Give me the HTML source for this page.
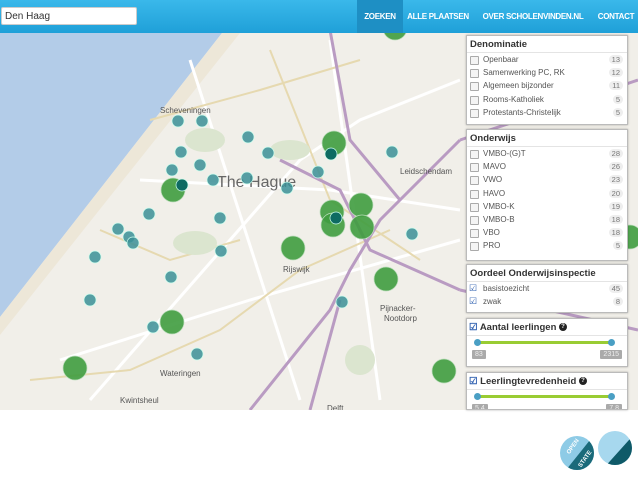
<!DOCTYPE html>
<html><head><meta charset="utf-8"><style>
*{margin:0;padding:0;box-sizing:border-box}
body{width:638px;height:478px;overflow:hidden;background:#fff;font-family:"Liberation Sans",sans-serif;position:relative}
.hdr{position:absolute;left:0;top:0;width:638px;height:33px;background:linear-gradient(#3ab8ea,#1fa0d8);}
.search{position:absolute;left:1px;top:7px;width:136px;height:18px;background:#fff;border:1px solid #ccc;border-radius:2px;font-size:10px;color:#333;padding:3px 3px}
.nav{position:absolute;top:0;height:33px;line-height:33px;color:#fff;font-size:8px;font-weight:bold;text-align:center;white-space:nowrap;letter-spacing:-0.3px}
.map{position:absolute;left:0;top:33px;width:638px;height:377px;overflow:hidden}
.box{position:absolute;left:466px;width:162px;background:#fff;border:1px solid #bbb;box-shadow:0 0 2px rgba(0,0,0,.3);font-size:8px;color:#555}
.box h3{font-size:9.5px;font-weight:bold;color:#333;padding:3px 3px 3px;border-bottom:1px solid #e4e4e4;height:17px;white-space:nowrap}
.row{height:13.2px;position:relative;padding-left:16px;line-height:13px}
.row:before{content:"";position:absolute;left:3px;top:3px;width:7px;height:7px;border:1px solid #aaa;border-radius:1px;background:#f4f4f4}
.ct{position:absolute;right:4px;top:2px;background:#eee;border-radius:5px;font-size:7.5px;padding:0 3px;line-height:9px;color:#777}
.chk{color:#2a5cae;font-size:9px;position:absolute;left:2px;top:0}
.ck:before{display:none}
.sl{position:relative;height:30px}
.bar{position:absolute;left:10px;right:14px;top:5px;height:3px;background:#9c3}
.dot{position:absolute;top:3px;width:7px;height:7px;border-radius:50%;background:#4a9fc4}
.lab{position:absolute;top:14px;background:#aaa;color:#eee;font-size:7px;padding:1px 3px;border-radius:1px}
.q{display:inline-block;width:8px;height:8px;border-radius:50%;background:#222;color:#fff;font-size:6px;text-align:center;line-height:8px;vertical-align:middle}
</style></head><body>
<div class="map">
<svg width="638" height="377" viewBox="0 33 638 377">
<rect x="0" y="33" width="638" height="377" fill="#f1efe9"/>
<polygon points="0,33 222,33 0,317" fill="#b3cce8"/>
<polygon points="222,33 240,33 0,335 0,317" fill="#ede7d8"/>
<g stroke="#fff" stroke-width="3" fill="none">
<path d="M90,400 L300,160 L360,120 L460,80"/><path d="M60,360 L250,300 L460,240"/><path d="M140,180 L330,190 L460,210"/><path d="M190,60 L300,400"/><path d="M330,40 L380,400"/>
</g>
<g stroke="#e6d9b0" stroke-width="2" fill="none">
<path d="M30,380 L130,370 L220,330 L300,270 L390,230"/><path d="M150,120 L260,90 L360,60"/><path d="M270,50 L330,200 L420,260"/><path d="M100,230 L170,260 L240,240"/>
</g>
<g stroke="#b99bc2" stroke-width="3" fill="none">
<path d="M250,410 L330,310 L350,270 L380,220 L460,140"/><path d="M280,160 L340,190 L370,250 L460,290"/><path d="M330,30 L350,140 L400,200"/><path d="M310,410 L340,300"/><path d="M460,290 L638,330"/><path d="M460,140 L638,80"/>
</g>
<g fill="#dbe5cf"><ellipse cx="205" cy="140" rx="20" ry="12"/><ellipse cx="195" cy="243" rx="22" ry="12"/><ellipse cx="290" cy="150" rx="20" ry="10"/><ellipse cx="360" cy="360" rx="15" ry="15"/></g>
<g font-size="8" fill="#555" font-family="Liberation Sans">
<text x="160" y="113">Scheveningen</text><text x="400" y="174">Leidschendam</text><text x="283" y="272">Rijswijk</text><text x="380" y="311">Pijnacker-</text><text x="384" y="321">Nootdorp</text><text x="160" y="376">Wateringen</text><text x="120" y="403">Kwintsheul</text><text x="327" y="411">Delft</text>
<text x="217" y="187" font-size="16" fill="#666">The Hague</text></g>
<g fill="#3b8f96" fill-opacity=".85" stroke="#cfe" stroke-width=".7">
<circle cx="178" cy="121" r="6"/><circle cx="202" cy="121" r="6"/><circle cx="248" cy="137" r="6"/><circle cx="181" cy="152" r="6"/><circle cx="268" cy="153" r="6"/><circle cx="200" cy="165" r="6"/><circle cx="172" cy="170" r="6"/><circle cx="213" cy="180" r="6"/><circle cx="247" cy="178" r="6"/><circle cx="318" cy="172" r="6"/><circle cx="287" cy="188" r="6"/><circle cx="149" cy="214" r="6"/><circle cx="220" cy="218" r="6"/><circle cx="118" cy="229" r="6"/><circle cx="129" cy="237" r="6"/><circle cx="133" cy="243" r="6"/><circle cx="95" cy="257" r="6"/><circle cx="221" cy="251" r="6"/><circle cx="171" cy="277" r="6"/><circle cx="392" cy="152" r="6"/><circle cx="412" cy="234" r="6"/><circle cx="90" cy="300" r="6"/><circle cx="342" cy="302" r="6"/><circle cx="153" cy="327" r="6"/><circle cx="197" cy="354" r="6"/>
</g>
<g fill="#3f9c3f" fill-opacity=".9" stroke="#bdb" stroke-width=".7">
<circle cx="334" cy="143" r="12"/><circle cx="173" cy="190" r="12"/><circle cx="332" cy="212" r="12"/><circle cx="361" cy="205" r="12"/><circle cx="333" cy="225" r="12"/><circle cx="362" cy="227" r="12"/><circle cx="293" cy="248" r="12"/><circle cx="386" cy="279" r="12"/><circle cx="172" cy="322" r="12"/><circle cx="75" cy="368" r="12"/><circle cx="444" cy="371" r="12"/><circle cx="395" cy="28" r="12"/><circle cx="630" cy="237" r="12"/>
</g>
<g fill="#0e6b62" stroke="#cfe" stroke-width=".7"><circle cx="331" cy="154" r="6"/><circle cx="182" cy="185" r="6"/><circle cx="336" cy="218" r="6"/></g>
</svg>
</div>
<div class="hdr"></div>
<div class="search">Den Haag</div>
<div class="nav" style="left:357px;width:46px;background:#1e8fc4">ZOEKEN</div>
<div class="nav" style="left:405px;width:66px">ALLE PLAATSEN</div>
<div class="nav" style="left:478px;width:110px">OVER SCHOLENVINDEN.NL</div>
<div class="nav" style="left:594px;width:44px">CONTACT</div>

<div class="box" style="top:35px;height:90px"><h3>Denominatie</h3>
<div class="row">Openbaar<span class="ct">13</span></div><div class="row">Samenwerking PC, RK<span class="ct">12</span></div><div class="row">Algemeen bijzonder<span class="ct">11</span></div><div class="row">Rooms-Katholiek<span class="ct">5</span></div><div class="row">Protestants-Christelijk<span class="ct">5</span></div></div>
<div class="box" style="top:129px;height:132px"><h3>Onderwijs</h3>
<div class="row">VMBO-(G)T<span class="ct">28</span></div><div class="row">MAVO<span class="ct">26</span></div><div class="row">VWO<span class="ct">23</span></div><div class="row">HAVO<span class="ct">20</span></div><div class="row">VMBO-K<span class="ct">19</span></div><div class="row">VMBO-B<span class="ct">18</span></div><div class="row">VBO<span class="ct">18</span></div><div class="row">PRO<span class="ct">5</span></div></div>
<div class="box" style="top:264px;height:49px"><h3>Oordeel Onderwijsinspectie</h3>
<div class="row ck"><span class="chk">☑</span>basistoezicht<span class="ct">45</span></div><div class="row ck"><span class="chk">☑</span>zwak<span class="ct">8</span></div></div>
<div class="box" style="top:318px;height:49px"><h3 style="padding-left:2px"><span style="color:#2a5cae">☑</span> Aantal leerlingen <span class="q">?</span></h3>
<div class="sl"><div class="bar"></div><div class="dot" style="left:7px"></div><div class="dot" style="right:12px"></div><div class="lab" style="left:5px">83</div><div class="lab" style="right:5px">2315</div></div></div>
<div class="box" style="top:372px;height:38px;overflow:hidden"><h3 style="padding-left:2px"><span style="color:#2a5cae">☑</span> Leerlingtevredenheid <span class="q">?</span></h3>
<div class="sl"><div class="bar"></div><div class="dot" style="left:7px"></div><div class="dot" style="right:12px"></div><div class="lab" style="left:5px">5.4</div><div class="lab" style="right:5px">7.8</div></div></div>

<svg style="position:absolute;left:558px;top:430px" width="80" height="42">
<defs><clipPath id="c1"><circle cx="19" cy="23" r="17"/></clipPath><clipPath id="c2"><circle cx="57" cy="18" r="17"/></clipPath></defs>
<g clip-path="url(#c1)"><rect width="80" height="50" fill="#8ecbe6"/><polygon points="40,0 40,50 0,50" fill="#1a6a7a"/><text x="8" y="22" font-size="6" fill="#fff" font-weight="bold" transform="rotate(-55 12 20)">OPEN</text><text x="18" y="36" font-size="6" fill="#fff" font-weight="bold" transform="rotate(-55 22 32)">STATE</text></g>
<g clip-path="url(#c2)"><rect width="80" height="50" fill="#a7d8ee"/><polygon points="80,0 80,50 35,50" fill="#0f5a68"/></g>
</svg>
</body></html>
